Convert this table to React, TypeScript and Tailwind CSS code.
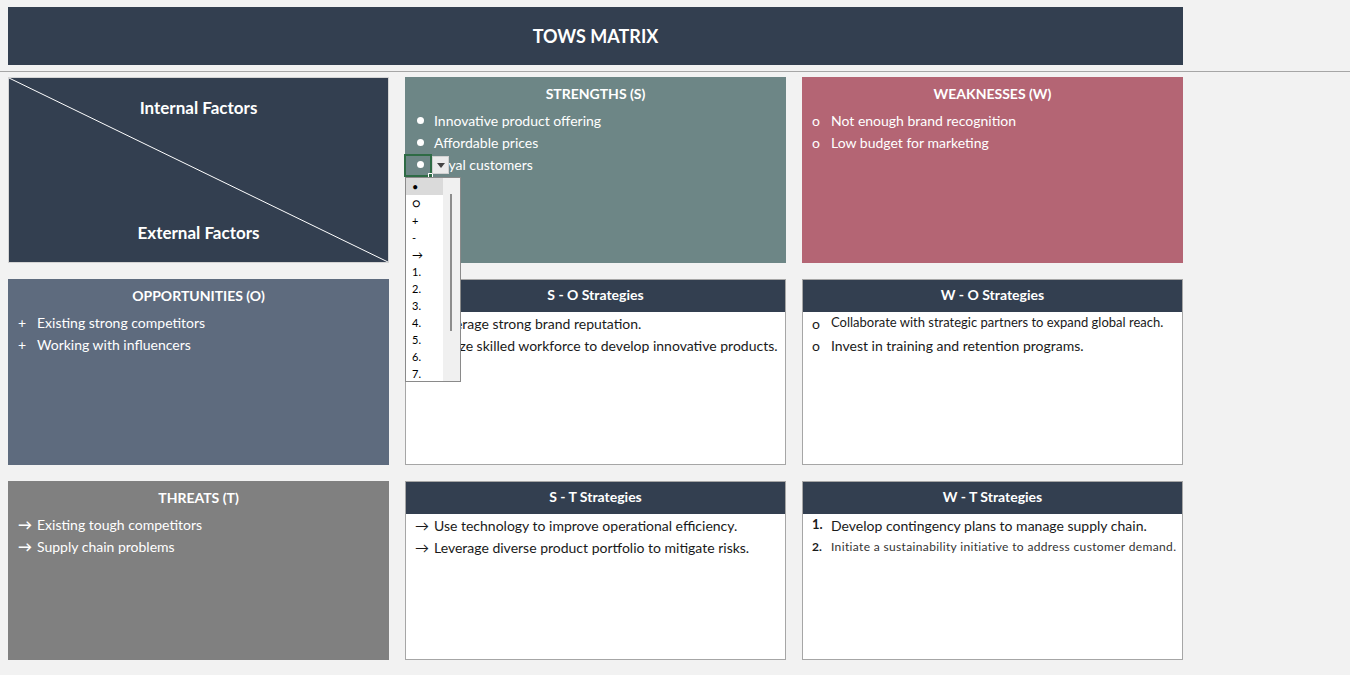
import React from "react"

type Item = { mark: React.ReactNode; text: string; markClass?: string; textClass?: string }

const font = { fontFamily: "Lato, 'Open Sans', sans-serif" }

const dot = <span className="inline-block w-[7px] h-[7px] rounded-full bg-white ml-[2px]" />

function FactorBox({ title, bg, items }: { title: string; bg: string; items: Item[] }) {
  return (
    <div className={`${bg} text-white pt-[7px]`}>
      <div className="text-center font-bold text-[14px] leading-[20px]">{title}</div>
      <ul className="mt-[5px]">
        {items.map((it) => (
          <li key={it.text} className="flex items-center h-[22px] text-[14px]">
            <span className={`w-[29px] shrink-0 pl-[10px] flex items-center ${it.markClass ?? ""}`}>{it.mark}</span>
            <span>{it.text}</span>
          </li>
        ))}
      </ul>
    </div>
  )
}

function StrategyBox({ title, items }: { title: string; items: Item[] }) {
  return (
    <div className="bg-white border border-[#a6a6a6] flex flex-col">
      <div className="h-[32px] pb-[3px] bg-[#333f50] text-white font-bold text-[14px] flex items-center justify-center">
        {title}
      </div>
      <ul>
        {items.map((it) => (
          <li key={it.text} className="flex items-center h-[22px] text-[14px] text-[#1a1a1a] whitespace-nowrap">
            <span className={`w-[28px] shrink-0 pl-[9px] ${it.markClass ?? ""}`}>{it.mark}</span>
            <span className={it.textClass}>{it.text}</span>
          </li>
        ))}
      </ul>
    </div>
  )
}

function Dropdown() {
  const options = ["•", "○", "+", "-", "→", "1.", "2.", "3.", "4.", "5.", "6.", "7."]
  return (
    <>
      {/* selected cell */}
      <div className="absolute left-[404px] top-[154px] w-[28px] h-[23px] border-2 border-[#2e6b45]">
        <div className="absolute -right-[3px] -bottom-[3px] w-[5px] h-[5px] bg-[#2e6b45] border border-white" />
      </div>
      {/* arrow button */}
      <div className="absolute left-[432px] top-[156px] w-[17px] h-[18px] bg-[#ebebeb] border border-[#d0d0d0] flex items-center justify-center">
        <svg width="8" height="5" viewBox="0 0 8 5">
          <path d="M0 0 L8 0 L4 5 Z" fill="#444" />
        </svg>
      </div>
      {/* list */}
      <div className="absolute left-[405px] top-[177px] w-[56px] h-[205px] bg-white border border-[#8a8a8a] flex">
        <div className="w-[37px] flex flex-col">
          {options.map((o, i) => (
            <div
              key={o}
              className={`h-[17px] leading-[17px] pl-[6px] text-black ${i === 1 ? "text-[13px]" : "text-[11px]"} ${
                i === 0 ? "bg-[#dadada]" : ""
              }`}
            >
              {o}
            </div>
          ))}
        </div>
        <div className="flex-1 bg-[#f0f0f0] relative">
          <div className="absolute left-[7px] top-[16px] w-[2px] h-[137px] bg-[#8c8c8c]" />
        </div>
      </div>
    </>
  )
}

export default function App() {
  return (
    <div className="relative w-[1350px] h-[675px] bg-[#f2f2f2] overflow-hidden" style={font}>
      <div className="pt-[7px] px-[8px]">
        <div className="w-[1175px] h-[58px] bg-[#333f50] text-white font-bold text-[18px] flex items-center justify-center">
          TOWS MATRIX
        </div>
      </div>
      <div className="mt-[6px] h-px bg-[#a6a6a6]" />
      <div className="mt-[5px] ml-[8px] w-[1175px] grid grid-cols-[381px_381px_381px] grid-rows-[186px_186px_179px] gap-[16px]">
        {/* corner cell */}
        <div className="relative bg-[#333f50] border border-[#d4d4d4] text-white font-bold text-[17px]">
          <svg className="absolute inset-0 w-full h-full" viewBox="0 0 100 100" preserveAspectRatio="none">
            <line x1="0" y1="0" x2="100" y2="100" stroke="#ffffff" strokeWidth="1" vectorEffect="non-scaling-stroke" />
          </svg>
          <div className="relative flex flex-col h-full items-center">
            <div className="mt-[18px] leading-[24px]">Internal Factors</div>
            <div className="mt-auto mb-[17px] leading-[24px]">External Factors</div>
          </div>
        </div>
        <FactorBox
          title="STRENGTHS (S)"
          bg="bg-[#6d8686]"
          items={[
            { mark: dot, text: "Innovative product offering" },
            { mark: dot, text: "Affordable prices" },
            { mark: dot, text: "Loyal customers" },
          ]}
        />
        <FactorBox
          title="WEAKNESSES (W)"
          bg="bg-[#b46574]"
          items={[
            { mark: "o", text: "Not enough brand recognition" },
            { mark: "o", text: "Low budget for marketing" },
          ]}
        />
        <FactorBox
          title="OPPORTUNITIES (O)"
          bg="bg-[#5e6b7e]"
          items={[
            { mark: "+", text: "Existing strong competitors" },
            { mark: "+", text: "Working with influencers" },
          ]}
        />
        <StrategyBox
          title="S - O Strategies"
          items={[
            { mark: "•", text: "Leverage strong brand reputation." },
            { mark: "•", text: "Utilize skilled workforce to develop innovative products." },
          ]}
        />
        <StrategyBox
          title="W - O Strategies"
          items={[
            { mark: "o", text: "Collaborate with strategic partners to expand global reach.", textClass: "text-[13px]" },
            { mark: "o", text: "Invest in training and retention programs." },
          ]}
        />
        <FactorBox
          title="THREATS (T)"
          bg="bg-[#808080]"
          items={[
            { mark: "→", text: "Existing tough competitors", markClass: "font-bold" },
            { mark: "→", text: "Supply chain problems", markClass: "font-bold" },
          ]}
        />
        <StrategyBox
          title="S - T Strategies"
          items={[
            { mark: "→", text: "Use technology to improve operational efficiency." },
            { mark: "→", text: "Leverage diverse product portfolio to mitigate risks." },
          ]}
        />
        <StrategyBox
          title="W - T Strategies"
          items={[
            { mark: "1.", text: "Develop contingency plans to manage supply chain.", markClass: "font-bold text-[13px]" },
            {
              mark: "2.",
              text: "Initiate a sustainability initiative to address customer demand.",
              markClass: "font-bold text-[12px]",
              textClass: "text-[12px] tracking-[0.35px] text-[#333]",
            },
          ]}
        />
      </div>
      <Dropdown />
    </div>
  )
}
